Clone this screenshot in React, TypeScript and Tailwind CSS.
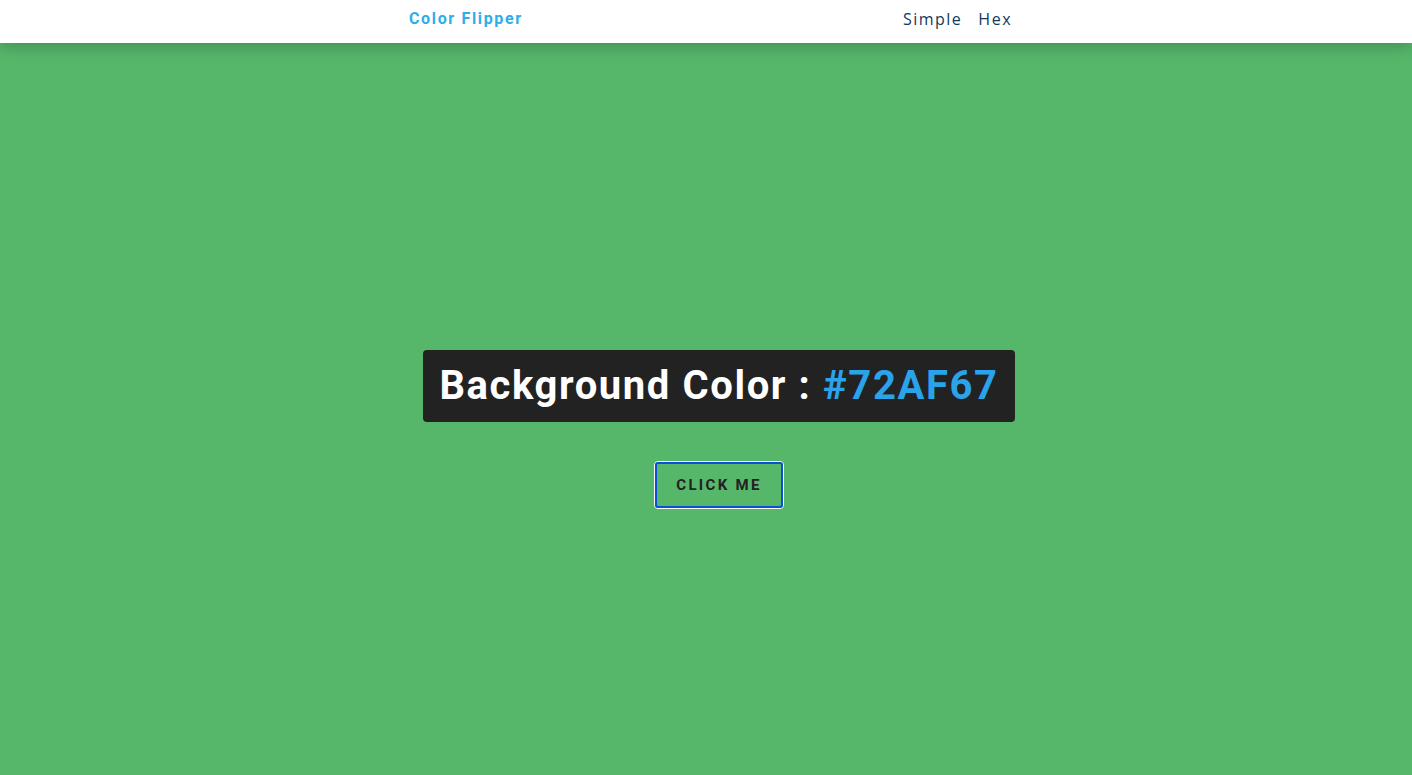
import React from "react";

export default function App() {
  return (
    <div className="min-h-screen w-full bg-[#56b76b] flex flex-col" style={{ fontFamily: "Roboto, 'Open Sans', sans-serif" }}>
      <nav className="h-[43px] bg-white shadow-[0_5px_15px_rgba(0,0,0,0.2)] flex items-center">
        <div className="w-[612px] mx-auto pl-[9px] flex justify-between items-center">
          <h4 className="text-[16px] font-bold tracking-[1.65px] text-[#2caeea] -mt-[5px]" style={{ fontFamily: "Roboto, sans-serif" }}>
            Color Flipper
          </h4>
          <ul className="flex gap-[16px] text-[16px] text-[#12395a] tracking-[1.5px] -mt-[6px]" style={{ fontFamily: "'Open Sans', sans-serif" }}>
            <li>Simple</li>
            <li>Hex</li>
          </ul>
        </div>
      </nav>
      <main className="flex flex-col items-center pt-[307px] pl-[26px]">
        <div className="bg-[#222222] rounded-[4px] h-[72px] px-[16px] flex items-center">
          <h2 className="text-[40px] font-bold text-white tracking-[1.6px] leading-none">
            Background Color : <span className="text-[#2aa3ea]">#72AF67</span>
          </h2>
        </div>
        <button className="mt-[39px] w-[130px] h-[48px] box-border rounded-[4px] border border-white bg-transparent flex items-center justify-center p-0">
          <span className="w-full h-full rounded-[3px] border-2 border-[#0b4fd6] flex items-center justify-center text-[15px] font-bold tracking-[2.3px] text-[#222222]">
            CLICK ME
          </span>
        </button>
      </main>
    </div>
  );
}
